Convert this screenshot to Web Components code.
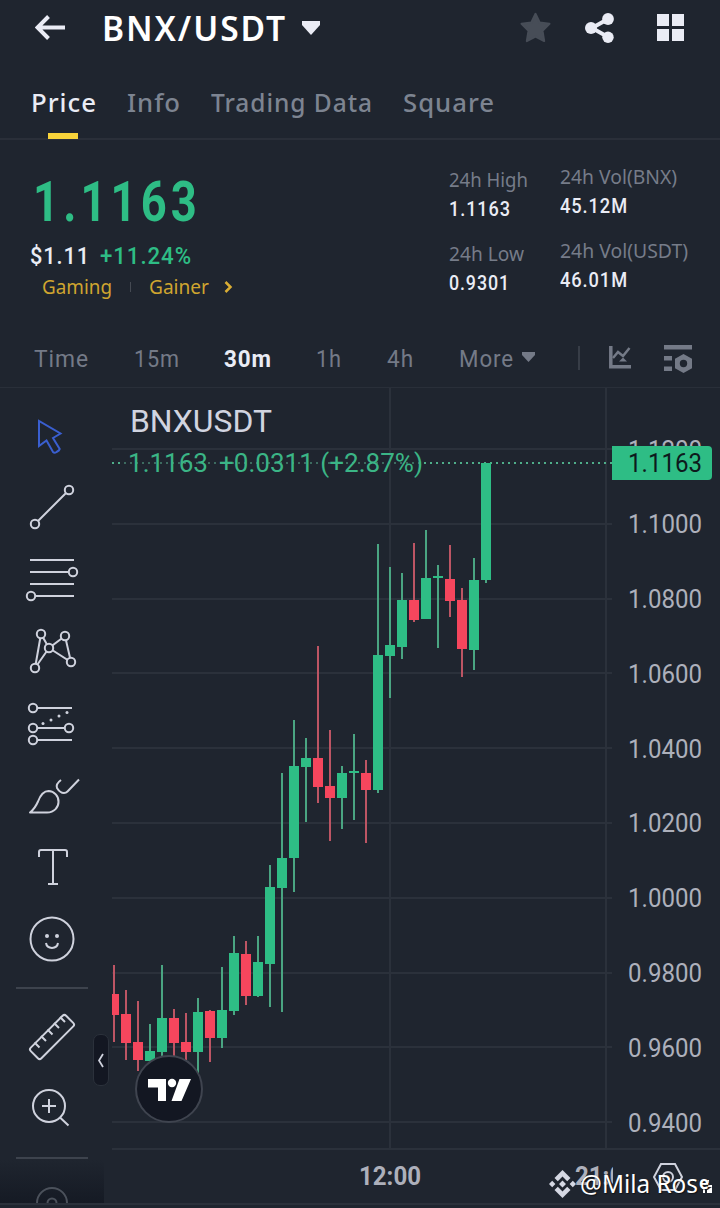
<!DOCTYPE html>
<html lang="en">
<head>
<meta charset="utf-8">
<title>BNX/USDT</title>
<style>
html,body{margin:0;background:#1f252f}
body{width:720px;height:1208px;overflow:hidden;font-family:Roboto,"Liberation Sans",sans-serif;color:#eaecf5}
</style>
</head>
<body>
<trade-page></trade-page>
<script>
const define=(name,html,setup)=>customElements.define(name,class extends HTMLElement{
  connectedCallback(){
    if(this.shadowRoot)return;
    const t=document.createElement('template');
    t.innerHTML=typeof html==='function'?html(this):html;
    this.attachShadow({mode:'open'}).append(t.content.cloneNode(true));
    if(setup)setup(this);
  }
});

/* A line of text condensed or widened to a given width. */
define('fit-text',e=>`<style>
:host{display:block;flex:none;width:${e.getAttribute('w')}px;white-space:nowrap}
span{display:inline-block;transform-origin:0 50%}
:host([face=noto]){font-family:"Noto Sans","Open Sans",sans-serif}
</style><span><slot></slot></span>`,e=>{
  const s=e.shadowRoot.querySelector('span');
  const w=s.getBoundingClientRect().width;
  if(w)s.style.transform=`scaleX(${+e.getAttribute('w')/w})`;
});

define('pair-header',`<style>
:host{display:flex;height:55px;align-items:center;padding-left:35px;box-sizing:border-box}
fit-text{font-size:35px;font-weight:600;letter-spacing:2px;line-height:56px;margin-left:37px;color:#fff}
svg{display:block;flex:none}
.caret{margin-left:15px}.star{margin-left:200px}.share{margin-left:34px}.grid{margin-left:42px}
</style>
<svg width="30" height="26" viewBox="0 0 30 26" fill="none" stroke="#eaecf5" stroke-width="4"><path d="M30 12.500H3M13.500 1.500 2.500 12.500 13.500 23.500"/></svg>
<fit-text face="noto" w="185">BNX/USDT</fit-text>
<svg class="caret" width="18" height="14" viewBox="0 0 18 14"><path fill="#eaecf5" d="M0 0H18V4L9 14 0 4Z"/></svg>
<svg class="star" width="31" height="31" viewBox="0 0 31 31"><path fill="#474d57" stroke="#474d57" stroke-width="2" stroke-linejoin="round" d="m15.500 1.800 4.300 8.800 9.700 1.200-7 6.900 1.700 10.400-8.700-4.600-8.700 4.600 1.700-10.400-7-6.900 9.700-1.200Z"/></svg>
<svg class="share" width="30" height="30" viewBox="0 0 30 30"><path d="M23 6 7 15l16 9" fill="none" stroke="#eaecf5" stroke-width="4"/><g fill="#eaecf5"><circle cx="23" cy="6" r="5.900"/><circle cx="6" cy="15" r="6"/><circle cx="23" cy="24.300" r="5.700"/></g></svg>
<svg class="grid" width="28" height="28" viewBox="0 0 28 28"><path fill="#eaecf5" d="M0 0h12v12H0zM15 0h12v12H15zM0 15h12v12H0zM15 15h12v12H15z"/></svg>`);

define('page-tabs',`<style>
:host{display:flex;height:85px;box-sizing:border-box;border-bottom:2px solid #2a2f39;padding:11px 0 0 31px;gap:30px;font-size:26px;font-weight:500;letter-spacing:1px;line-height:73px;color:#7d8491}
.on{color:#eaecf5}
.tab{position:relative}
.tab::after{content:"";position:absolute;left:17px;top:67px;width:30px;height:6px;background:#f8d33a}
</style>
<div class="tab"><fit-text face="noto" class="on" w="66">Price</fit-text></div>
<fit-text face="noto" w="54">Info</fit-text>
<fit-text face="noto" w="162">Trading Data</fit-text>
<fit-text face="noto" w="92">Square</fit-text>`);

define('stat-item',e=>`<style>
:host{display:block;height:74px}
fit-text{font-size:20px}
.l{color:#767c89;line-height:29px}.v{color:#eaecf5;font-weight:500;letter-spacing:1px;line-height:31px}
</style><fit-text face="noto" class="l" w="${e.getAttribute('lw')}">${e.getAttribute('label')}</fit-text>
<fit-text class="v" w="${e.getAttribute('vw')}">${e.getAttribute('value')}</fit-text>`);

define('price-summary',`<style>
:host{display:grid;grid-template-columns:449px 111px 1fr;height:189px}
.main{padding-top:42px}
.big{font-size:55px;font-weight:700;letter-spacing:5px;line-height:41px;height:40px;color:#2ebd85;margin-left:33px}
.row{display:flex}
.usd{margin:20px 0 0 30px;font-size:24px;font-weight:500;letter-spacing:1px;line-height:28px;gap:10px}
.usd .up{color:#2ebd85}
.tags{margin:3px 0 0 42px;font-size:20px;line-height:28px;color:#d0a52f;align-items:center}
.sep{width:1px;height:10px;background:#454a53;margin:0 18px}
.col{padding-top:25px}.col.vol{padding-top:22px}
</style>
<div class="main"><fit-text class="big" w="168">1.1163</fit-text>
<div class="row usd"><fit-text w="60">$1.11</fit-text><fit-text class="up" w="92">+11.24%</fit-text></div>
<div class="row tags"><fit-text face="noto" w="70">Gaming</fit-text><i class="sep"></i><fit-text face="noto" w="60">Gainer</fit-text>
<svg width="9" height="12" viewBox="0 0 9 12" style="margin-left:15px" fill="none" stroke="#d9ad34" stroke-width="2.500"><path d="m1.500 1 5 5-5 5"/></svg></div></div>
<div class="col"><stat-item label="24h High" value="1.1163" lw="79" vw="62"></stat-item><stat-item label="24h Low" value="0.9301" lw="75" vw="61"></stat-item></div>
<div class="col vol"><stat-item label="24h Vol(BNX)" value="45.12M" lw="117" vw="68"></stat-item><stat-item label="24h Vol(USDT)" value="46.01M" lw="128" vw="68"></stat-item></div>`);

define('interval-bar',`<style>
:host{display:flex;align-items:center;height:59px;box-sizing:border-box;padding-left:34px;font-size:24.5px;letter-spacing:1px;line-height:60px;color:#747a87;box-shadow:inset 0 -1px #292f39}
.on{color:#eaecf5;font-weight:700}
svg{flex:none;display:block}
</style>
<fit-text w="55">Time</fit-text>
<fit-text w="46" style="margin-left:45px">15m</fit-text>
<fit-text class="on" w="48" style="margin-left:44px">30m</fit-text>
<fit-text w="26" style="margin-left:44px">1h</fit-text>
<fit-text w="27" style="margin-left:45px">4h</fit-text>
<fit-text w="55" style="margin-left:45px">More</fit-text>
<svg width="13" height="10" viewBox="0 0 13 10" style="margin:-3px 0 0 8px"><path fill="#747a87" d="M0 0h13v3L6.500 10 0 3Z"/></svg>
<svg width="2" height="24" style="margin:-2px 0 0 43px"><path fill="#373d47" d="M0 0h2v24H0z"/></svg>
<svg width="22" height="23" viewBox="0 0 22 23" style="margin:-2px 0 0 29px"><path fill="none" stroke="#747a87" stroke-width="3.500" d="M1.800 0v20.800H22"/><path fill="none" stroke="#747a87" stroke-width="2.500" d="m4 12 5-6 5 4 6.500-8"/><path fill="#747a87" d="M10 15.500h8l-4-4Z"/></svg>
<svg width="29" height="29" viewBox="0 0 29 29" style="margin:-1px 0 0 33px"><path fill="#747a87" d="M0 1h28v4.500H0zM0 12h8v4.500H0zM0 22.500h8V27H0z"/><path fill="#747a87" fill-rule="evenodd" d="m19.500 10 8.500 4.800v9.400L19.500 29 11 24.200v-9.400ZM19.500 15.800a3.700 3.700 0 1 0 0 7.400 3.700 3.700 0 0 0 0-7.400Z"/></svg>`);

/* Drawing tools: each cell shows one icon, in the coordinates of the column. */
define('tool-cell',e=>{
 const y=+e.getAttribute('y'),h=+e.getAttribute('h')||72;
 return `<style>:host{display:block;height:${h}px}svg{display:block}</style>
<svg width="104" height="${h}" viewBox="0 ${y} 104 ${h}" fill="none" stroke="#cfd2dd" stroke-width="2" stroke-linecap="butt">${ICONS[e.getAttribute('icon')]}</svg>`});
const dot=(x,y,r=4.2)=>`<circle cx="${x}" cy="${y}" r="${r}" fill="#1f252f"/>`;
const ICONS={
 cursor:'<path stroke="#3a5fd0" d="M39 421v25l7.500-5.500 6.500 11.500q1.500 1.500 3.500 0 3-1.500 3.200-3L53 438l7.500-4.500Z"/>',
 line:'<path d="M35 524 69 490"/>'+dot(35,524)+dot(69,490),
 fib:'<path d="M30 560H74M30 572H73M30 584H74M31 596H74"/>'+dot(73,572)+dot(31,596),
 pattern:'<path d="m35 668 6-34 8 14 16-12 6 26-22-14Z"/>'+dot(35,668)+dot(41,634)+dot(49,648)+dot(65,636)+dot(71,662),
 forecast:'<path d="M33 708H72M33 728H69M33 740H72"/><g fill="#cfd2dd" stroke="none"><circle cx="43" cy="723.500" r="1.500"/><circle cx="51" cy="720" r="1.500"/><circle cx="59" cy="716" r="1.500"/><circle cx="67" cy="712.500" r="1.500"/></g>'+dot(33,708)+dot(33,728)+dot(69,728)+dot(33,740),
 brush:'<path stroke-linejoin="round" d="M30 812.500q5-4 8-11 4-10.500 10.500-10.500a10.500 10.500 0 0 1 10 11c0 5-4 10.500-11.500 10.500Z"/><path d="M61 780q-5.500 4-4 8 3 5 7 5 2 0 3.500-1.500L79 779.500"/>',
 text:'<path d="M39 857v-5q0-2 2-2h24q2 0 2 2v5M53 850v34M48 884h10"/>',
 smile:'<circle cx="52" cy="939" r="21.500"/><g fill="#cfd2dd" stroke="none"><circle cx="47" cy="936" r="2"/><circle cx="57" cy="936" r="2"/></g><path d="M46 943c1 6.500 11 6.500 12 0"/>',
 rule:'<path stroke="#3d434d" d="M16 988H88"/>',
 ruler:'<rect x="27" y="1029.500" width="50" height="15" rx="2.500" transform="rotate(-45 52 1037)"/><path d="m34.500 1042.500 5 5M41 1036l5 5M47.500 1029.500l5 5M54 1023l5 5M60 1017l5 5"/>',
 zoom:'<circle cx="49" cy="1106" r="16"/><path d="M49 1099v14M42 1106h14M60 1117.500l8.500 8"/>',
 rule2:'<path stroke="#3d434d" d="M16 1158H88"/>',
 magnet:'<g stroke="#4b515b"><circle cx="52" cy="1203" r="15"/><circle cx="52" cy="1203" r="4.500"/></g>'
};
define('tool-rail',`<style>:host{display:flex;flex-direction:column;width:104px;height:816px;padding-top:11px;box-sizing:border-box;overflow:hidden;position:relative}
.fade{position:absolute;left:0;bottom:1px;width:104px;height:43px;background:linear-gradient(#1f252f,#151a24);z-index:-1}</style>
<div class="fade"></div>
${['cursor','line','fib','pattern','forecast','brush','text','smile'].map((n,i)=>`<tool-cell icon="${n}" y="${399+72*i}"></tool-cell>`).join('')}
<tool-cell icon="rule" y="975" h="26"></tool-cell><tool-cell icon="ruler" y="1001"></tool-cell><tool-cell icon="zoom" y="1073"></tool-cell>
<tool-cell icon="rule2" y="1145" h="26"></tool-cell><tool-cell icon="magnet" y="1171" h="32"></tool-cell>`);

/* Candles: x, high, low, body top, body bottom, falling */
const CANDLES=[[114,965,1042,994,1015,1],[126,990,1060,1014,1043,1],[138,1001,1071,1042,1060,1],[150,1024,1061,1051,1061],[162,965,1056,1018,1052],[174,1009,1056,1018,1043,1],[186,1013,1060,1042,1052,1],[198,998,1075,1012,1052],[210,1010,1062,1011,1038,1],[222,967,1048,1010,1038],[234,936,1015,953,1011],[246,941,1005,954,996,1],[258,936,997,962,996],[270,865,1007,887,964],[282,773,1012,858,888],[294,720,892,766,858],[306,738,822,758,767],[318,646,803,758,787,1],[330,730,841,786,798,1],[342,766,829,773,798],[354,734,820,771,773],[366,760,843,773,790,1],[378,544,793,655,790],[390,567,698,645,656],[402,573,659,600,647],[414,543,622,600,620,1],[426,530,619,578,619],[438,565,648,576,578],[450,545,617,579,601,1],[462,588,677,600,649,1],[474,558,670,580,650],[486,463,583,463,580]];
define('candle-plot',()=>{
 let g='';for(let i=0;i<10;i++)g+=`<path d="M112 ${449+Math.round(74.8*i)}H612"/>`;
 const c=CANDLES.map(([x,h,l,t,b,d])=>`<path fill="${d?'#bd5564':'#4aa582'}" d="M${x-1} ${h}h2V${l}h-2z"/><path fill="${d?'#f6465d':'#2ebd85'}" d="M${x-5} ${t}h10V${b}h-10z"/>`).join('');
 return `<style>:host{display:block;width:508px;height:760px}svg{display:block}text{font-family:Roboto,"Liberation Sans",sans-serif}</style>
<svg width="508" height="760" viewBox="104 388 508 760">
<clipPath id="c"><path d="M112 388H612V1148H112z"/></clipPath>
<g stroke="#2b313b" stroke-width="2">${g}<path d="M390 388V1148M606 388V1148"/></g>
<g stroke-width="2" stroke-dasharray="2 4"><path d="M112 463H124M424 463H612" stroke="#4fae8a"/><path d="M124 463H424" stroke="#3d6b60"/></g>
<g clip-path="url(#c)">${c}</g>
<text x="130" y="432" font-size="30.500" fill="#d1d4e0" textLength="142" lengthAdjust="spacingAndGlyphs">BNXUSDT</text>
<g font-size="26" fill="#3bb586"><text x="128" y="472" textLength="80" lengthAdjust="spacingAndGlyphs">1.1163</text><text x="219" y="472" textLength="204" lengthAdjust="spacingAndGlyphs">+0.0311 (+2.87%)</text></g>
<circle cx="169" cy="1089" r="33" fill="#131722" stroke="#3f444f" stroke-width="2"/>
<g fill="#fff"><path d="M148 1079h18v22h-8v-13.500h-10zM179.500 1079h11.500l-9.500 22h-10z"/><circle cx="172" cy="1083" r="4.200"/></g>
</svg>`});

define('price-axis',`<style>
:host{display:block;position:relative;width:108px;height:760px;overflow:hidden}
.l{display:grid;grid-auto-rows:74.8px;padding:23.500px 0 0 16px;font-size:25px;line-height:77px;color:#adb0bb}
.tag{position:absolute;left:0;top:58px;width:100px;height:34px;box-sizing:border-box;padding-left:16px;background:#2ebd85;border-radius:0 4px 4px 0;font-size:25px;line-height:36px;color:#0d1a1c}
</style><div class="l">${['1.1200','1.1000','1.0800','1.0600','1.0400','1.0200','1.0000','0.9800','0.9600','0.9400'].map(v=>`<fit-text w="74">${v}</fit-text>`).join('')}</div>
<div class="tag"><fit-text w="74">1.1163</fit-text></div>`);

define('time-axis',`<style>
:host{display:flex;align-items:center;height:56px;box-sizing:border-box;margin-left:8px;border-top:2px solid #2b313b;font-size:25px;font-weight:700;line-height:54px;color:#adb0bb;overflow:hidden}
.b{width:38px;overflow:hidden;margin-left:154px}
svg{margin-left:40px}
</style><fit-text w="62" style="margin-left:247px">12:00</fit-text>
<div class="b"><fit-text w="62">21:00</fit-text></div>
<svg width="30" height="28" viewBox="0 0 30 28" fill="none" stroke="#cfd2dd" stroke-width="2"><path d="M8 1h14l7 13-7 13H8L1 14Z"/><circle cx="15" cy="14" r="5"/></svg>`);

define('rail-handle',`<style>:host{position:absolute;left:93px;top:646px;width:16px;height:52px;box-sizing:border-box;background:#131722;border:1px solid #2b313b;border-radius:7px;display:grid;place-items:center}</style>
<svg width="6" height="15" viewBox="0 0 6 15" fill="none" stroke="#cfd2dd" stroke-width="1.800"><path d="M5 1 1 7.500 5 14"/></svg>`);

define('author-mark',`<style>
:host{position:absolute;left:549px;top:777px;width:171px;height:38px;display:flex;align-items:center;font-size:25px;line-height:38px;color:#fff;text-shadow:1px 1px 1px #0008}
svg{flex:none;display:block}
fit-text{margin-left:4px;margin-top:-2px}
.last{font-size:17px;margin-left:1px;font-weight:700;line-height:42px}
</style><svg width="27" height="28" viewBox="0 0 27 28" fill="#d5d8e3"><path d="m13.500 0 8 8-3.300 3.300-4.700-4.700-4.700 4.700L5.500 8ZM13.500 28l8-8-3.300-3.300-4.700 4.700-4.700-4.700L5.500 20ZM13.500 10.500 17 14l-3.500 3.500L10 14ZM3.200 10.800 6.400 14l-3.200 3.200L0 14ZM23.800 10.800 27 14l-3.200 3.200-3.200-3.200Z"/></svg>
<fit-text face="noto" w="118">@Mila Ros</fit-text><fit-text class="last" face="noto" w="10">e</fit-text>
<svg width="10" height="15" viewBox="0 0 10 15" style="margin:3px 0 0 -7px"><path fill="#fff" d="M1 1h2v2H1zM5 2h2v3H5zM2 5h2v2H2zM6 7h4v2H6zM0 9h5v2H0zM1 11h2v4H1zM5 12l5-3v6H5z"/></svg>`);

define('chart-area',`<style>
:host{display:grid;grid-template-columns:104px 1fr;height:820px;position:relative;z-index:0}
.top{display:flex}
:host::after{content:"";position:absolute;left:0;right:0;top:815px;height:2px;background:#2b313b}
</style><tool-rail></tool-rail><div><div class="top"><candle-plot></candle-plot><price-axis></price-axis></div><time-axis></time-axis></div>
<rail-handle></rail-handle><author-mark></author-mark>`);

define('trade-page',`<style>:host{display:flex;flex-direction:column;width:720px;height:1208px;background:#1f252f;overflow:hidden}</style>
<pair-header></pair-header><page-tabs></page-tabs><price-summary></price-summary><interval-bar></interval-bar><chart-area></chart-area>`);
</script>
</body>
</html>
